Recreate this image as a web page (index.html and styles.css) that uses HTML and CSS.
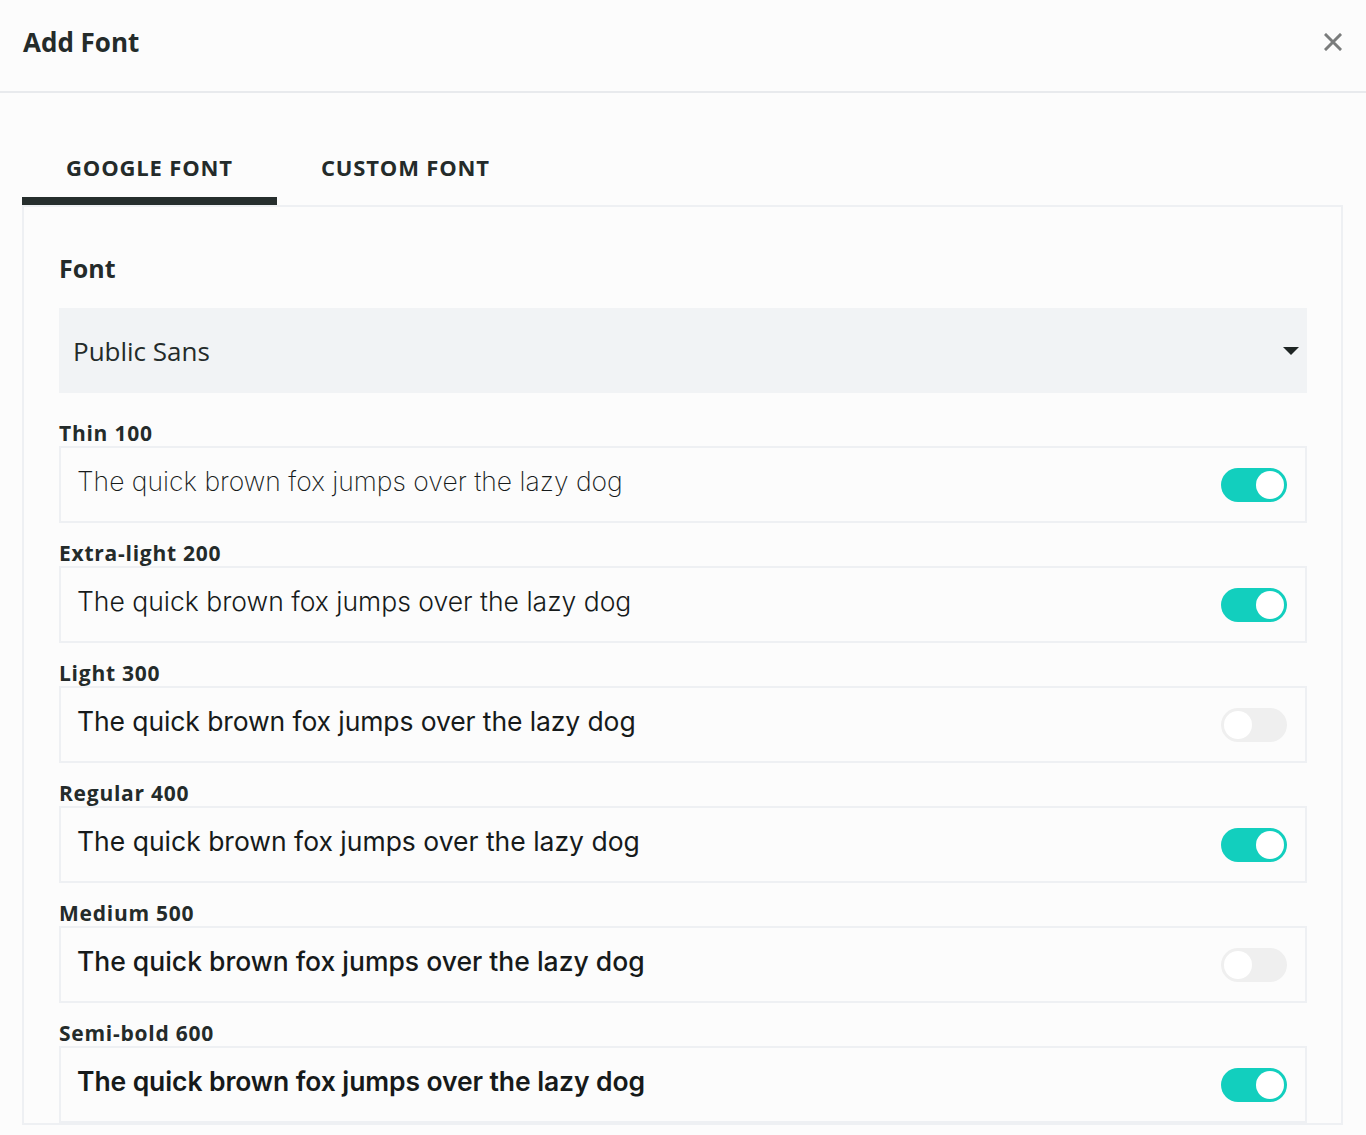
FILE: index.html
```html
<html>

<head>
    <meta charset="utf-8">
    <link rel="stylesheet" href="styles.css">
</head>

<body>
    <div class="modal">
        <div class="modalHeader">
            <h1>Add Font</h1>
            <svg class="closeIcon" width="18" height="18" viewBox="0 0 18 18">
                <path d="M2 2 L16 16 M16 2 L2 16" stroke="#7a7c7c" stroke-width="3" stroke-linecap="square" />
            </svg>
        </div>

        <div class="tabs">
            <div class="tab active">Google Font</div>
            <div class="tab">Custom Font</div>
        </div>

        <div class="panel">
            <div class="fieldLabel">Font</div>
            <div class="select">
                <span>Public Sans</span>
                <span class="caret"></span>
            </div>

            <!-- one block per weight -->
            <div class="weightLabel">Thin 100</div>
            <div class="weightRow">
                <span class="preview w100">The quick brown fox jumps over the lazy dog</span>
                <span class="toggle on"></span>
            </div>

            <div class="weightLabel">Extra-light 200</div>
            <div class="weightRow">
                <span class="preview w200">The quick brown fox jumps over the lazy dog</span>
                <span class="toggle on"></span>
            </div>

            <div class="weightLabel">Light 300</div>
            <div class="weightRow">
                <span class="preview w300">The quick brown fox jumps over the lazy dog</span>
                <span class="toggle"></span>
            </div>

            <div class="weightLabel">Regular 400</div>
            <div class="weightRow">
                <span class="preview w400">The quick brown fox jumps over the lazy dog</span>
                <span class="toggle on"></span>
            </div>

            <div class="weightLabel">Medium 500</div>
            <div class="weightRow">
                <span class="preview w500">The quick brown fox jumps over the lazy dog</span>
                <span class="toggle"></span>
            </div>

            <div class="weightLabel">Semi-bold 600</div>
            <div class="weightRow">
                <span class="preview w600">The quick brown fox jumps over the lazy dog</span>
                <span class="toggle on"></span>
            </div>
        </div>
    </div>
</body>

</html>
```

FILE: styles.css
```css
body {
    margin: 0;
    background: #fcfcfc;
    font-family: "Open Sans", Lato, sans-serif;
    color: #242b2a;
}

.modalHeader {
    height: 91px;
    padding: 0 24px 0 23px;
    display: flex;
    align-items: center;
    justify-content: space-between;
    border-bottom: 2px solid #e8eaed;
}

.modalHeader h1 {
    margin: 0;
    font-size: 26px;
    font-weight: 700;
    line-height: 30px;
    padding-bottom: 8px;
}

.closeIcon {
    display: block;
    margin-bottom: 8px;
}

.tabs {
    display: flex;
    padding-left: 22px;
}

.tab {
    padding: 61px 44px 17px 44px;
    line-height: 26px;
    font-size: 22px;
    font-weight: 700;
    letter-spacing: 0.85px;
    text-transform: uppercase;
    border-bottom: 8px solid transparent;
}

.tab.active {
    border-bottom-color: #262e2d;
}

.panel {
    margin: 0 23px 0 22px;
    border: 2px solid #eef0f3;
    padding: 46px 34px 0 35px;
}

.fieldLabel {
    font-size: 25px;
    font-weight: 700;
    line-height: 30px;
}

.select {
    margin-top: 25px;
    height: 85px;
    background: #f1f3f5;
    padding: 0 8px 0 14px;
    display: flex;
    align-items: center;
    justify-content: space-between;
    font-size: 26px;
}

.caret {
    width: 0;
    height: 0;
    border-left: 8px solid transparent;
    border-right: 8px solid transparent;
    border-top: 8px solid #1f2524;
}

.weightLabel {
    margin-top: 27px;
    font-size: 21px;
    font-weight: 700;
    letter-spacing: 0.75px;
    line-height: 26px;
}

.weightRow+.weightLabel {
    margin-top: 17px;
}

.weightRow {
    height: 73px;
    border: 2px solid #eef0f3;
    padding: 0 18px 0 16px;
    display: flex;
    align-items: center;
    justify-content: space-between;
}

.preview {
    font-family: Inter, "Noto Sans", sans-serif;
    font-size: 26.5px;
    color: #161a1a;
    padding-bottom: 7px;
}

.w100 { font-weight: 200; }
.w200 { font-weight: 300; }
.w300 { font-weight: 400; letter-spacing: -0.1px; }
.w400 { font-weight: 400; }
.w500 { font-weight: 500; }
.w600 { font-weight: 600; letter-spacing: -0.1px; }

.toggle {
    width: 66px;
    height: 34px;
    border-radius: 17px;
    background: #efefef;
    position: relative;
}

.toggle::after {
    content: "";
    position: absolute;
    top: 3px;
    left: 3px;
    width: 28px;
    height: 28px;
    border-radius: 50%;
    background: #fff;
}

.toggle.on {
    background: #12cfbe;
}

.toggle.on::after {
    left: 35px;
}
```
